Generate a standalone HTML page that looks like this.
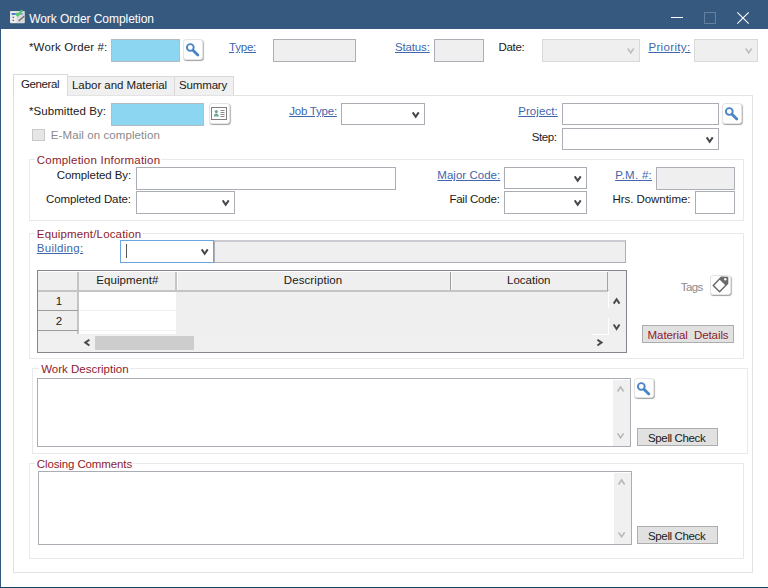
<!DOCTYPE html>
<html>
<head>
<meta charset="utf-8">
<title>Work Order Completion</title>
<style>
html,body{margin:0;padding:0;}
body{width:768px;height:588px;overflow:hidden;background:#fff;position:relative;
  font-family:"Liberation Sans",sans-serif;font-size:11.5px;color:#1a1a1a;}
.a{position:absolute;box-sizing:border-box;}
.t{position:absolute;white-space:pre;line-height:14px;height:14px;}
.lk{color:#4166ad;text-decoration:underline;}
.red{color:#8c1c2c;}
.gry{color:#8a8a8a;}
.in{position:absolute;box-sizing:border-box;border:1px solid #abadb5;background:#fff;}
.blue{background:#8dd6f1;border-color:#b4bcc2;}
.dis{background:#efefef;border-color:#d9d9d9;}
.ro{background:#efefef;border-color:#adafb6;}
.fs{position:absolute;box-sizing:border-box;border:1px solid #e9e9e9;}
.lg{position:absolute;white-space:pre;line-height:14px;height:14px;background:#fff;color:#8c1c2c;}
.btn{position:absolute;box-sizing:border-box;border:1px solid #adadad;background:#e1e1e1;text-align:center;white-space:pre;}
.ib{position:absolute;box-sizing:border-box;background:#fefefe;border:1px solid #e4e4e4;border-radius:3px;box-shadow:1px 1px 1px rgba(0,0,0,0.28),0 1px 0 rgba(0,0,0,0.12);}
svg{position:absolute;overflow:visible;}
</style>
</head>
<body>
<!-- window chrome -->
<div class="a" style="left:0;top:0;width:768px;height:29px;background:#36597f;"></div>
<div class="a" style="left:0;top:0;width:1px;height:588px;background:#36597f;"></div>
<div class="a" style="left:0;top:587px;width:768px;height:1px;background:#0d4866;"></div>
<div class="t" id="title" style="left:29.2px;top:12px;font-size:12px;color:#fff;letter-spacing:-0.05px;">Work Order Completion</div>


<!-- title icon -->
<svg style="left:9.9px;top:9.9px" width="16" height="14" viewBox="0 0 16 14">
  <rect x="0" y="1" width="14.8" height="12.3" rx="0.8" fill="#d9d9d9"/>
  <rect x="0.5" y="1.5" width="6.2" height="11.3" fill="#ececec"/>
  <rect x="1.7" y="3" width="11.3" height="1.9" fill="#8fa9d6"/><rect x="1.7" y="3" width="4" height="1.9" fill="#4a7ad0"/>
  <rect x="2.5" y="6.7" width="1.6" height="1.3" fill="#6e6e6e"/>
  <rect x="2.5" y="9.7" width="1.6" height="1.3" fill="#6e6e6e"/>
  <path d="M8.6 11.1 L14.2 6.2" stroke="#6a6a6a" stroke-width="1.3"/>
  <path d="M5.5 3.2 L7.7 5.5 L12.2 0.2" stroke="#52c865" stroke-width="2.1" fill="none"/>
</svg>
<!-- window controls -->
<div class="a" style="left:671px;top:17px;width:12px;height:1px;background:#fff;"></div>
<div class="a" style="left:704px;top:12px;width:12px;height:12px;border:1px solid #657f9d;"></div>
<svg style="left:737px;top:12px" width="12" height="12" viewBox="0 0 12 12"><path d="M0.3 0.3 L11.7 11.7 M11.7 0.3 L0.3 11.7" stroke="#fff" stroke-width="1.1" fill="none"/></svg>

<!-- top row -->
<div class="t" id="l_wo" style="left:29px;top:40px;letter-spacing:0.14px;">*Work Order #:</div>
<div class="in blue" style="left:111px;top:39px;width:69px;height:23px;"></div>
<div class="ib" id="b_s1" style="left:183px;top:39px;width:20px;height:21px;"><svg style="left:0;top:0" width="20" height="20" viewBox="0 0 20 20"><circle cx="6.3" cy="7.5" r="3.4" fill="none" stroke="#4a84c4" stroke-width="1.9"/><path d="M9.2 10.4 L13.8 15" stroke="#4a84c4" stroke-width="2.8" stroke-linecap="round"/></svg></div>
<div class="t lk" id="l_type" style="left:229px;top:40px;letter-spacing:-0.22px;">Type:</div>
<div class="in ro" style="left:273px;top:39px;width:83px;height:23px;"></div>
<div class="t lk" id="l_status" style="left:395px;top:40px;letter-spacing:-0.15px;">Status:</div>
<div class="in ro" style="left:434px;top:39px;width:50px;height:23px;"></div>
<div class="t" id="l_date" style="left:498.6px;top:40px;letter-spacing:-0.37px;">Date:</div>
<div class="in dis" style="left:542px;top:39px;width:98px;height:23px;"></div>
<div class="t lk" id="l_pri" style="left:648.4px;top:40px;letter-spacing:0.35px;">Priority:</div>
<div class="in dis" style="left:694px;top:39px;width:64px;height:23px;"></div>

<!-- tab panel -->
<div class="a" id="panel" style="left:13px;top:95px;width:740px;height:478px;border:1px solid #e3e3e3;"></div>


<!-- tabs -->
<div class="a" style="left:67px;top:76px;width:108px;height:20px;background:#f0f0f0;border:1px solid #dadada;border-bottom-color:#e3e3e3;"></div>
<div class="a" style="left:174px;top:76px;width:60px;height:20px;background:#f0f0f0;border:1px solid #dadada;border-bottom-color:#e3e3e3;"></div>
<div class="a" style="left:13px;top:74px;width:55px;height:22px;background:#fff;border:1px solid #dadada;border-bottom:none;"></div>
<div class="t" id="t_gen" style="left:21px;top:77px;letter-spacing:-0.39px;">General</div>
<div class="t" id="t_lab" style="left:72px;top:78px;letter-spacing:-0.05px;">Labor and Material</div>
<div class="t" id="t_sum" style="left:179px;top:78px;letter-spacing:-0.15px;">Summary</div>

<!-- general row -->
<div class="t" id="l_sub" style="left:29px;top:104px;letter-spacing:0.07px;">*Submitted By:</div>
<div class="in blue" style="left:111px;top:103px;width:93px;height:23px;"></div>
<div class="ib" id="b_card" style="left:209px;top:103px;width:21px;height:21px;"><svg style="left:0;top:0" width="20" height="20" viewBox="0 0 20 20"><rect x="1.5" y="3.5" width="15" height="12" fill="#fff" stroke="#808080" stroke-width="1"/><circle cx="6.3" cy="7.6" r="1.6" fill="#6fa898"/><path d="M3.8 12.6 C3.8 10 5 9.4 6.3 9.4 C7.6 9.4 8.8 10 8.8 12.6 Z" fill="#6fa898"/><path d="M10.5 6.5 H14.5 M10.5 8.5 H14.5 M10.5 10.5 H14.5 M10.5 12.5 H14.5" stroke="#8a8a8a" stroke-width="1"/></svg></div>
<div class="t lk" id="l_job" style="left:289.2px;top:104px;letter-spacing:-0.22px;">Job Type:</div>
<div class="in" style="left:341px;top:103px;width:84px;height:22px;"></div>
<div class="t lk" id="l_proj" style="left:518.2px;top:104px;letter-spacing:0.08px;">Project:</div>
<div class="in" style="left:562px;top:103px;width:157px;height:22px;"></div>
<div class="ib" id="b_s2" style="left:722px;top:103px;width:20px;height:21px;"><svg style="left:0;top:0" width="20" height="20" viewBox="0 0 20 20"><circle cx="6.3" cy="7.5" r="3.4" fill="none" stroke="#4a84c4" stroke-width="1.9"/><path d="M9.2 10.4 L13.8 15" stroke="#4a84c4" stroke-width="2.8" stroke-linecap="round"/></svg></div>
<div class="a" style="left:32px;top:129px;width:13px;height:12px;background:#e6e6e6;border:1px solid #c8c8c8;"></div>
<div class="t gry" id="l_email" style="left:50.8px;top:128px;letter-spacing:0.09px;">E-Mail on completion</div>
<div class="t" id="l_step" style="left:531.8px;top:130px;letter-spacing:-0.44px;">Step:</div>
<div class="in" style="left:562px;top:128px;width:157px;height:22px;"></div>

<!-- completion info -->
<div class="fs" style="left:29px;top:159px;width:715px;height:62px;"></div>
<div class="lg" id="g_comp" style="left:34.8px;top:153px;padding:0 1px 0 2px;letter-spacing:0.21px;">Completion Information</div>
<div class="t" id="l_cby" style="left:56.8px;top:168px;letter-spacing:-0.09px;">Completed By:</div>
<div class="in" style="left:136px;top:167px;width:260px;height:23px;"></div>
<div class="t" id="l_cdt" style="left:46px;top:192px;letter-spacing:-0.09px;">Completed Date:</div>
<div class="in" style="left:136px;top:191px;width:99px;height:23px;"></div>
<div class="t lk" id="l_maj" style="left:437.3px;top:168px;letter-spacing:0.03px;">Major Code:</div>
<div class="in" style="left:504px;top:167px;width:83px;height:22px;"></div>
<div class="t" id="l_fail" style="left:449.4px;top:192px;letter-spacing:-0.22px;">Fail Code:</div>
<div class="in" style="left:504px;top:191px;width:83px;height:23px;"></div>
<div class="t lk" id="l_pm" style="left:615.2px;top:168px;letter-spacing:0.27px;">P.M. #:</div>
<div class="in ro" style="left:656px;top:167px;width:79px;height:23px;"></div>
<div class="t" id="l_hrs" style="left:612.4px;top:192px;letter-spacing:-0.04px;">Hrs. Downtime:</div>
<div class="in" style="left:695px;top:191px;width:40px;height:23px;"></div>


<!-- equipment/location -->
<div class="fs" style="left:29px;top:233px;width:715px;height:126px;"></div>
<div class="lg" id="g_eq" style="left:34.8px;top:227px;padding:0 1px 0 2px;letter-spacing:0.16px;">Equipment/Location</div>
<div class="t lk" id="l_bld" style="left:36.8px;top:241px;letter-spacing:0.27px;">Building:</div>
<div class="in" style="left:120px;top:240px;width:94px;height:23px;border-color:#6aa6e0;"></div>
<div class="a" style="left:126px;top:244px;width:1px;height:14px;background:#555;"></div>
<div class="in ro" style="left:214px;top:240px;width:412px;height:23px;border-top:2px solid #c9cbd1;"></div>

<!-- grid -->
<div class="a" id="grid" style="left:37px;top:270px;width:590px;height:83px;background:#efefef;border:1px solid #84868e;"></div>
<div class="a" style="left:38px;top:271px;width:570px;height:1px;background:#fff;"></div>
<div class="a" style="left:38px;top:290px;width:571px;height:2px;background:#c4c4c4;"></div>
<div class="a" style="left:79px;top:292px;width:97px;height:42px;background:#fff;"></div>
<div class="a" style="left:77px;top:272px;width:2px;height:62px;background:#c4c4c4;"></div>
<div class="a" style="left:175px;top:272px;width:2px;height:18px;background:#c6c6c6;"></div>
<div class="a" style="left:177px;top:272px;width:1px;height:18px;background:#fafafa;"></div>
<div class="a" style="left:450px;top:272px;width:1px;height:18px;background:#9c9c9c;"></div>
<div class="a" style="left:451px;top:272px;width:1px;height:18px;background:#fafafa;"></div>
<div class="a" style="left:607px;top:272px;width:1px;height:19px;background:#a4a4a4;"></div>
<div class="a" style="left:79px;top:310px;width:97px;height:1px;background:#f1f1f1;"></div>
<div class="a" style="left:79px;top:330px;width:97px;height:1px;background:#f1f1f1;"></div>
<div class="a" style="left:38px;top:310px;width:40px;height:1px;background:#9c9c9c;"></div>
<div class="a" style="left:38px;top:330px;width:40px;height:1px;background:#9c9c9c;"></div>
<div class="t" id="h_eq" style="left:96.2px;top:273px;letter-spacing:0.1px;">Equipment#</div>
<div class="t" id="h_desc" style="left:283.8px;top:273px;letter-spacing:0.09px;">Description</div>
<div class="t" id="h_loc" style="left:507px;top:273px;">Location</div>
<div class="t" style="left:39px;top:294px;width:40px;text-align:center;">1</div>
<div class="t" style="left:39px;top:314px;width:40px;text-align:center;">2</div>
<!-- grid scrollbars -->
<div class="a" style="left:38px;top:334px;width:588px;height:18px;background:#f0f0f0;"></div>
<div class="a" style="left:95px;top:336px;width:99px;height:14px;background:#cdcdcd;"></div>

<div class="t gry" id="l_tags" style="left:680.8px;top:280px;letter-spacing:-0.6px;">Tags</div>
<div class="ib" id="b_tag" style="left:710px;top:275px;width:21px;height:20px;"><svg style="left:0;top:-0.8px" width="20" height="20" viewBox="0 0 20 20"><path d="M2.2 10.4 L10.2 2.2 L16.6 2.4 L16.6 8.6 L8.6 16.8 Z" fill="#fff" stroke="#666" stroke-width="1.4" stroke-linejoin="round"/><path d="M10.2 2.2 L16.6 2.4 L16.6 8.6 L14.6 10.6 L8.2 4.2 Z" fill="#6b6b6b"/><circle cx="14.3" cy="4.3" r="1.2" fill="#fff"/></svg></div>
<div class="btn" style="left:642px;top:325px;width:92px;height:18px;"></div>
<div class="t red" id="x_mat" style="left:647.6px;top:328px;letter-spacing:-0.09px;">Material  Details</div>

<!-- work description -->
<div class="fs" style="left:32px;top:368px;width:716px;height:86px;"></div>
<div class="lg" id="g_wd" style="left:39.2px;top:362px;padding:0 1px 0 2px;">Work Description</div>
<div class="in" style="left:37px;top:378px;width:594px;height:69px;"></div>
<div class="a" style="left:613px;top:380px;width:17px;height:66px;background:#f0f0f0;"></div>
<div class="ib" id="b_s3" style="left:634px;top:378px;width:20px;height:20px;"><svg style="left:0;top:0" width="20" height="20" viewBox="0 0 20 20"><circle cx="6.3" cy="7.5" r="3.4" fill="none" stroke="#4a84c4" stroke-width="1.9"/><path d="M9.2 10.4 L13.8 15" stroke="#4a84c4" stroke-width="2.8" stroke-linecap="round"/></svg></div>
<div class="btn" style="left:637px;top:428px;width:81px;height:18px;"></div>
<div class="t" id="x_sp1" style="left:648px;top:431px;letter-spacing:-0.36px;">Spell Check</div>

<!-- closing comments -->
<div class="fs" style="left:29px;top:463px;width:715px;height:96px;"></div>
<div class="lg" id="g_cc" style="left:34.8px;top:457px;padding:0 1px 0 2px;letter-spacing:-0.12px;">Closing Comments</div>
<div class="in" style="left:38px;top:471px;width:594px;height:74px;"></div>
<div class="a" style="left:614px;top:473px;width:17px;height:71px;background:#f0f0f0;"></div>
<div class="btn" style="left:637px;top:526px;width:81px;height:18px;"></div>
<div class="t" id="x_sp2" style="left:648px;top:529px;letter-spacing:-0.36px;">Spell Check</div>


<!-- chevrons -->
<svg style="left:626.8px;top:47.8px" width="7.4" height="6" viewBox="0 0 7.4 6"><path d="M0.70 0.42 L3.70 4.76 L6.70 0.42" stroke="#bebebe" stroke-width="1.6" fill="none"/></svg>
<svg style="left:744.8px;top:47.8px" width="7.4" height="6" viewBox="0 0 7.4 6"><path d="M0.70 0.42 L3.70 4.76 L6.70 0.42" stroke="#bebebe" stroke-width="1.6" fill="none"/></svg>
<svg style="left:411.8px;top:111.8px" width="7.4" height="6" viewBox="0 0 7.4 6"><path d="M0.70 0.42 L3.70 4.76 L6.70 0.42" stroke="#454545" stroke-width="2.0" fill="none"/></svg>
<svg style="left:705.8px;top:136.8px" width="7.4" height="6" viewBox="0 0 7.4 6"><path d="M0.70 0.42 L3.70 4.76 L6.70 0.42" stroke="#454545" stroke-width="2.0" fill="none"/></svg>
<svg style="left:221.8px;top:199.8px" width="7.4" height="6" viewBox="0 0 7.4 6"><path d="M0.70 0.42 L3.70 4.76 L6.70 0.42" stroke="#454545" stroke-width="2.0" fill="none"/></svg>
<svg style="left:573.8px;top:175.8px" width="7.4" height="6" viewBox="0 0 7.4 6"><path d="M0.70 0.42 L3.70 4.76 L6.70 0.42" stroke="#454545" stroke-width="2.0" fill="none"/></svg>
<svg style="left:573.8px;top:199.8px" width="7.4" height="6" viewBox="0 0 7.4 6"><path d="M0.70 0.42 L3.70 4.76 L6.70 0.42" stroke="#454545" stroke-width="2.0" fill="none"/></svg>
<svg style="left:200.8px;top:248.8px" width="7.4" height="6" viewBox="0 0 7.4 6"><path d="M0.70 0.42 L3.70 4.76 L6.70 0.42" stroke="#454545" stroke-width="2.0" fill="none"/></svg>
<svg style="left:613px;top:297.5px" width="7.2" height="6" viewBox="0 0 7.2 6"><path d="M0.70 5.58 L3.60 1.24 L6.50 5.58" stroke="#4a4a4a" stroke-width="2.0" fill="none"/></svg>
<svg style="left:613px;top:323.6px" width="7.2" height="6.2" viewBox="0 0 7.2 6.2"><path d="M0.70 0.42 L3.60 4.96 L6.50 0.42" stroke="#4a4a4a" stroke-width="2.0" fill="none"/></svg>
<svg style="left:597.4px;top:339.4px" width="5.8" height="7.2" viewBox="0 0 5.8 7.2"><path d="M0.42 0.70 L4.56 3.60 L0.42 6.50" stroke="#4a4a4a" stroke-width="2.0" fill="none"/></svg>
<svg style="left:83.6px;top:339.4px" width="5.8" height="7.2" viewBox="0 0 5.8 7.2"><path d="M5.38 0.70 L1.24 3.60 L5.38 6.50" stroke="#4a4a4a" stroke-width="2.0" fill="none"/></svg>
<svg style="left:617px;top:385.8px" width="7.2" height="5.8" viewBox="0 0 7.2 5.8"><path d="M0.56 5.46 L3.60 0.99 L6.64 5.46" stroke="#b8b8b8" stroke-width="1.6" fill="none"/></svg>
<svg style="left:617px;top:433px" width="7.2" height="5.8" viewBox="0 0 7.2 5.8"><path d="M0.56 0.34 L3.60 4.81 L6.64 0.34" stroke="#b8b8b8" stroke-width="1.6" fill="none"/></svg>
<svg style="left:618px;top:479px" width="7.2" height="5.8" viewBox="0 0 7.2 5.8"><path d="M0.56 5.46 L3.60 0.99 L6.64 5.46" stroke="#b8b8b8" stroke-width="1.6" fill="none"/></svg>
<svg style="left:618px;top:532px" width="7.2" height="5.8" viewBox="0 0 7.2 5.8"><path d="M0.56 0.34 L3.60 4.81 L6.64 0.34" stroke="#b8b8b8" stroke-width="1.6" fill="none"/></svg>
<div class="a" style="left:608px;top:291px;width:1px;height:17px;background:#fff;"></div>
<div class="a" style="left:608px;top:318px;width:1px;height:17px;background:#fff;"></div>
<div class="a" style="left:592px;top:334px;width:17px;height:1px;background:#fff;"></div>
</body>
</html>
